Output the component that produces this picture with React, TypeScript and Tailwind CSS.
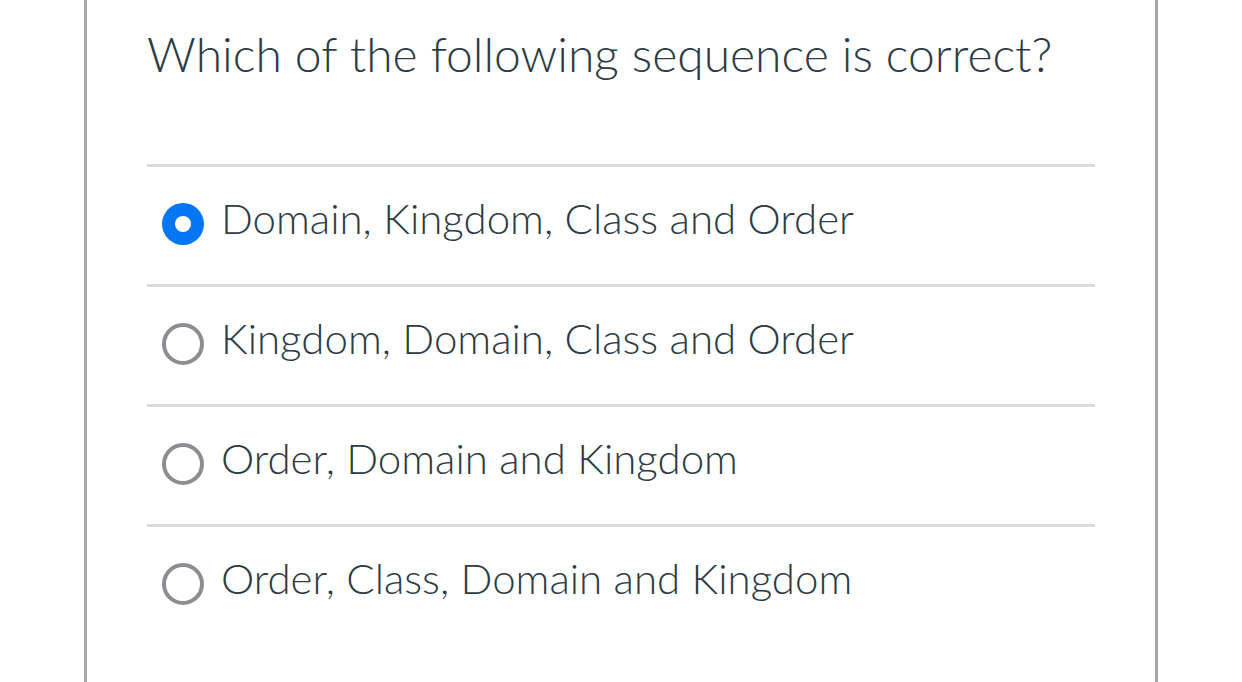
const options = [
  'Domain, Kingdom, Class and Order',
  'Kingdom, Domain, Class and Order',
  'Order, Domain and Kingdom',
  'Order, Class, Domain and Kingdom',
];

function Radio({ checked }: { checked: boolean }) {
  if (checked) {
    return (
      <span className="grid h-[42px] w-[42px] shrink-0 place-items-center rounded-full bg-[#0576f4]">
        <span className="h-[16px] w-[16px] rounded-full bg-white" />
      </span>
    );
  }
  return <span className="h-[42px] w-[42px] shrink-0 rounded-full border-[4px] border-[#8d8d91] bg-white" />;
}

export default function App() {
  return (
    <div className="h-[682px] w-full overflow-hidden bg-white font-['Lato','Noto_Sans',sans-serif] text-[#2d3b45]">
      <div className="ml-[84px] h-full w-[1074px] border-x-[3px] border-[#a8a8a8] pl-[60px]">
        <h1 className="pt-[30px] text-[48px] font-light leading-none">Which of the following sequence is correct?</h1>
        <ul className="mt-[86px] w-[948px]">
          {options.map((label, i) => (
            <li key={label} className="flex h-[120px] items-center gap-[17px] border-t-[3px] border-[#dadada] pb-[4px] pl-[15px]">
              <Radio checked={i === 0} />
              <span className="mb-[11px] text-[42px] font-light leading-none">{label}</span>
            </li>
          ))}
        </ul>
      </div>
    </div>
  );
}
